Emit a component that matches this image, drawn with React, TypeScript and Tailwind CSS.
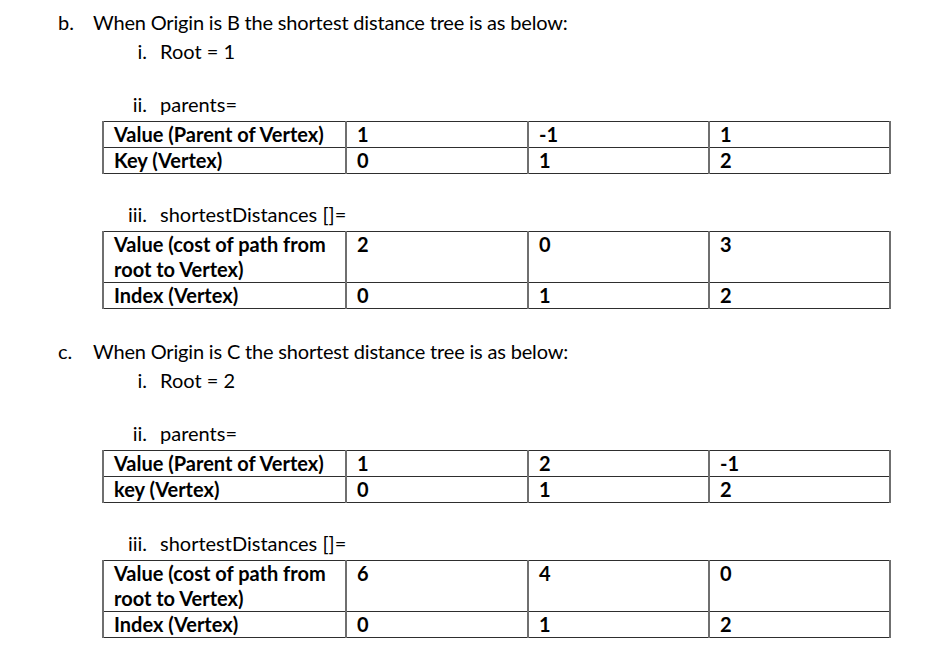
const font = { fontFamily: "Lato, 'Liberation Sans', sans-serif" };

type Row = { label: string[]; cells: string[] };

function Marker({ m, children }: { m: string; children: React.ReactNode }) {
  return (
    <div className="flex h-[26px] items-center">
      <span className="w-[147px] text-right">{m}</span>
      <span className="pl-[13px]">{children}</span>
    </div>
  );
}

function Heading({ m, children }: { m: string; children: React.ReactNode }) {
  return (
    <div className="flex h-[29px] items-center">
      <span className="w-[58px]" />
      <span className="w-[35px]">{m}</span>
      <span className="tracking-[-0.18px]">{children}</span>
    </div>
  );
}

function DataTable({ rows }: { rows: Row[] }) {
  return (
    <div className="mt-[4px] pl-[102px]">
      <table className="w-[787px] table-fixed border-collapse">
        <colgroup>
          <col className="w-[243px]" />
          <col className="w-[182px]" />
          <col className="w-[181px]" />
          <col className="w-[181px]" />
        </colgroup>
        <tbody>
          {rows.map((r, i) => (
            <tr key={i}>
              <td className="border-x-2 border-y border-x-[#6f6f6f] border-y-[#2e2e2e] px-[10px] py-0 align-top font-bold leading-[25px]">
                {r.label.map((l, j) => (
                  <div key={j}>{l}</div>
                ))}
              </td>
              {r.cells.map((c, j) => (
                <td
                  key={j}
                  className="border-x-2 border-y border-x-[#6f6f6f] border-y-[#2e2e2e] px-[10px] py-0 align-top font-bold leading-[25px]"
                >
                  {c}
                </td>
              ))}
            </tr>
          ))}
        </tbody>
      </table>
    </div>
  );
}

function Section({
  letter,
  origin,
  root,
  parents,
  keyLabel,
  dist,
}: {
  letter: string;
  origin: string;
  root: string;
  parents: string[];
  keyLabel: string;
  dist: string[];
}) {
  return (
    <div>
      <Heading m={`${letter}.`}>When Origin is {origin} the shortest distance tree is as below:</Heading>
      <div className="flex h-[29px] items-center">
        <span className="w-[147px] text-right">i.</span>
        <span className="pl-[13px]">Root = {root}</span>
      </div>
      <div className="mt-[26px]">
        <Marker m="ii.">parents=</Marker>
      </div>
      <DataTable
        rows={[
          { label: ["Value (Parent of Vertex)"], cells: parents },
          { label: [keyLabel], cells: ["0", "1", "2"] },
        ]}
      />
      <div className="mt-[27px]">
        <Marker m="iii.">shortestDistances []=</Marker>
      </div>
      <DataTable
        rows={[
          { label: ["Value (cost of path from", "root to Vertex)"], cells: dist },
          { label: ["Index (Vertex)"], cells: ["0", "1", "2"] },
        ]}
      />
    </div>
  );
}

export default function App() {
  return (
    <div className="min-h-[668px] w-[938px] bg-white pt-[7px] text-[20px] text-black" style={font}>
      <Section letter="b" origin="B" root="1" parents={["1", "-1", "1"]} keyLabel="Key (Vertex)" dist={["2", "0", "3"]} />
      <div className="mt-[27px]">
        <Section letter="c" origin="C" root="2" parents={["1", "2", "-1"]} keyLabel="key (Vertex)" dist={["6", "4", "0"]} />
      </div>
    </div>
  );
}
